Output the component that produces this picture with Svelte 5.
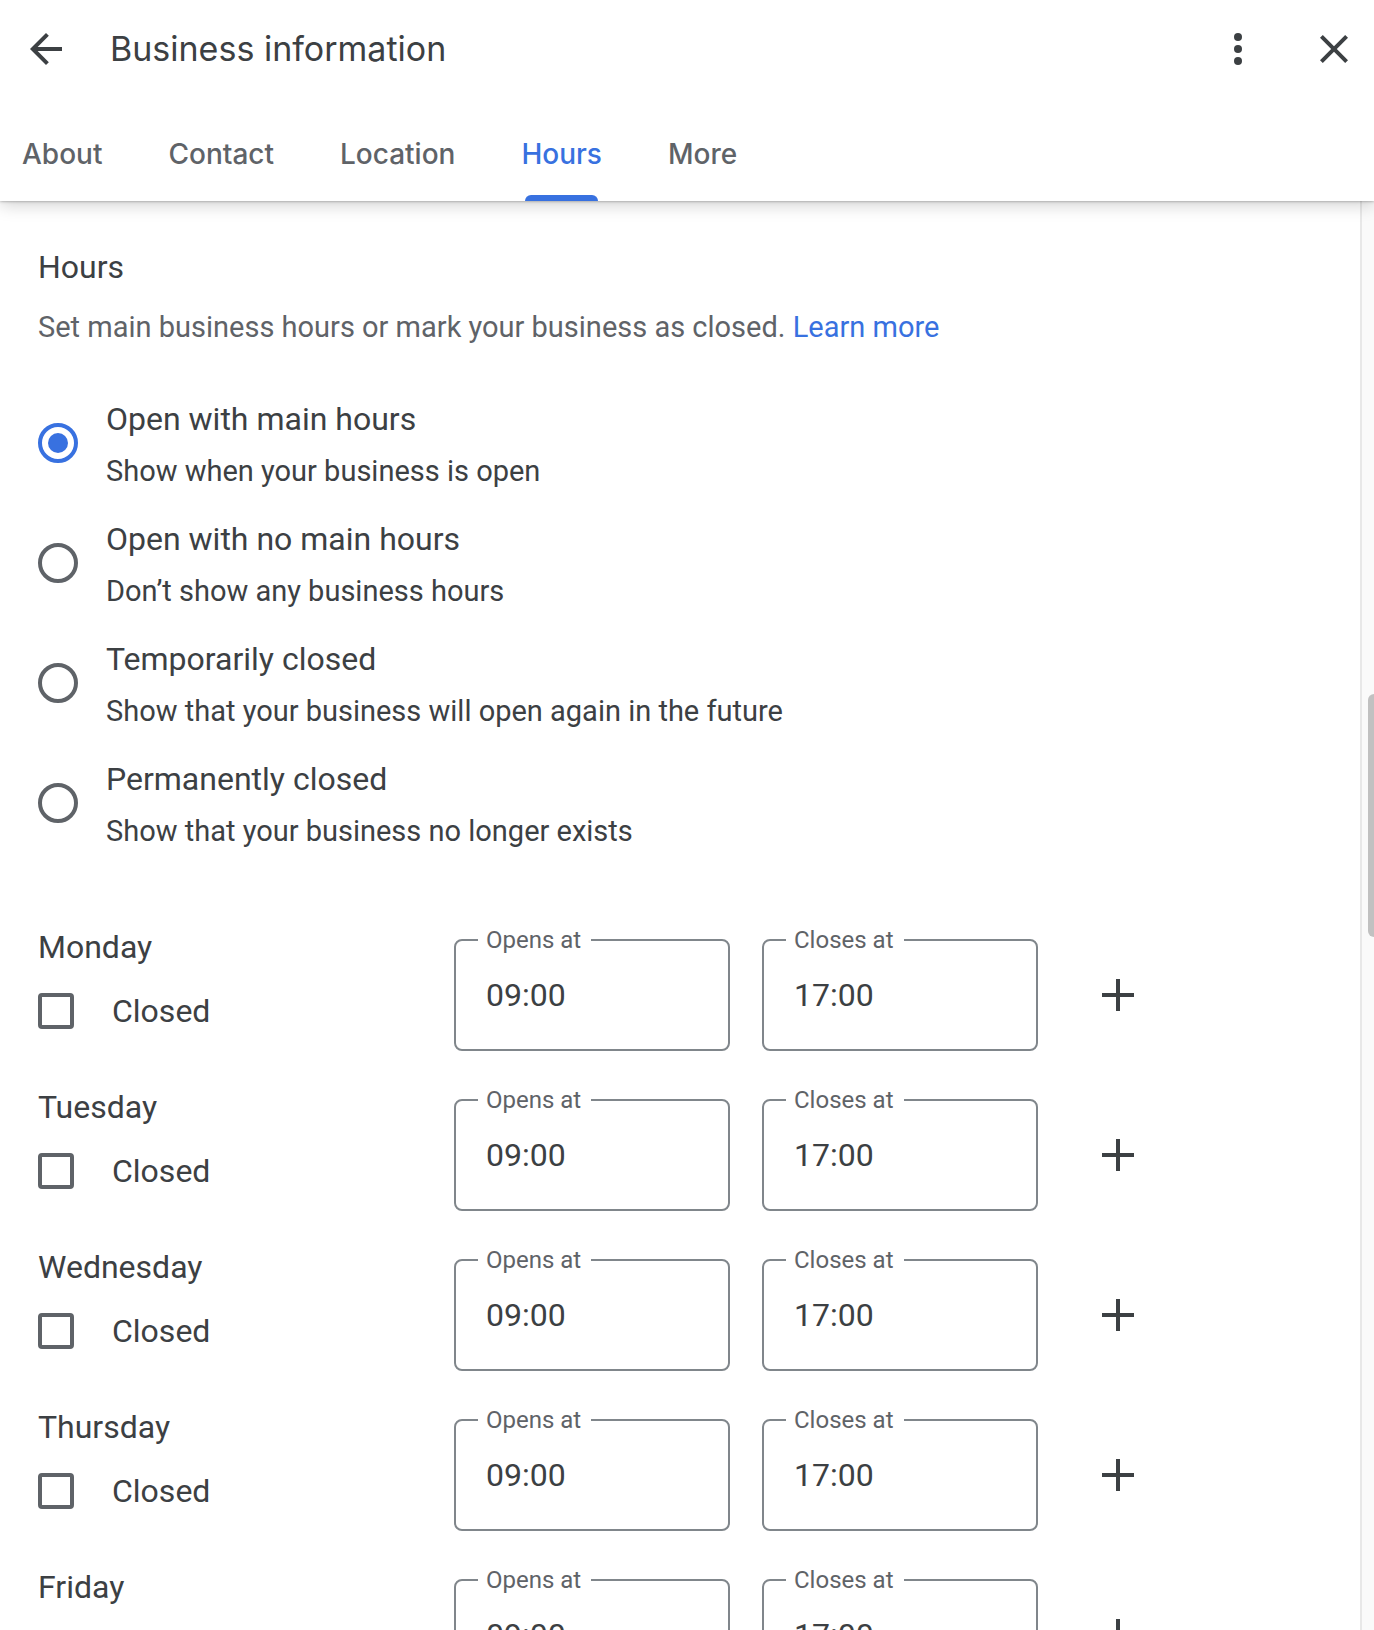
<script lang="ts">
    const tabs = ['About', 'Contact', 'Location', 'Hours', 'More']

    const modes = [
        { id: 'main', title: 'Open with main hours', text: 'Show when your business is open' },
        { id: 'no-main', title: 'Open with no main hours', text: 'Don’t show any business hours' },
        { id: 'temporary', title: 'Temporarily closed', text: 'Show that your business will open again in the future' },
        { id: 'permanent', title: 'Permanently closed', text: 'Show that your business no longer exists' },
    ]

    let activeTab = $state('Hours')
    let mode = $state('main')
    let days = $state(
        ['Monday', 'Tuesday', 'Wednesday', 'Thursday', 'Friday'].map((name) => ({
            name,
            closed: false,
            opens: '09:00',
            closes: '17:00',
        }))
    )
</script>

<div class="dialog">
    <header>
        <div class="bar">
            <button class="icon-button" aria-label="Back">
                <svg viewBox="0 0 24 24"><path d="M20 11H7.83l5.59-5.59L12 4l-8 8 8 8 1.41-1.41L7.83 13H20v-2z" /></svg>
            </button>
            <h1>Business information</h1>
            <button class="icon-button" aria-label="More options">
                <svg viewBox="0 0 24 24">
                    <circle cx="12" cy="6" r="2" />
                    <circle cx="12" cy="12" r="2" />
                    <circle cx="12" cy="18" r="2" />
                </svg>
            </button>
            <button class="icon-button" aria-label="Close">
                <svg viewBox="0 0 24 24"><path d="M19 6.41L17.59 5 12 10.59 6.41 5 5 6.41 10.59 12 5 17.59 6.41 19 12 13.41 17.59 19 19 17.59 13.41 12z" /></svg>
            </button>
        </div>
        <nav>
            {#each tabs as tab}
                <button class="tab" class:active={activeTab === tab} onclick={() => (activeTab = tab)}>{tab}</button>
            {/each}
        </nav>
    </header>

    <div class="body">
        <main>
            <h2>Hours</h2>
            <p class="intro">Set main business hours or mark your business as closed. <a href="#learn-more">Learn more</a></p>

            <div class="modes" role="radiogroup" aria-label="Hours">
                {#each modes as item}
                    <label class="mode">
                        <input type="radio" name="mode" value={item.id} bind:group={mode} />
                        <span class="mode-text">
                            <span class="mode-title">{item.title}</span>
                            <span class="mode-hint">{item.text}</span>
                        </span>
                    </label>
                {/each}
            </div>

            <div class="days">
                {#each days as day}
                    <section class="day">
                        <div class="day-info">
                            <h3>{day.name}</h3>
                            <label class="closed">
                                <input type="checkbox" bind:checked={day.closed} />
                                Closed
                            </label>
                        </div>
                        <div class="times">
                            <div class="field">
                                <label for="{day.name}-opens">Opens at</label>
                                <input id="{day.name}-opens" type="text" bind:value={day.opens} />
                            </div>
                            <div class="field">
                                <label for="{day.name}-closes">Closes at</label>
                                <input id="{day.name}-closes" type="text" bind:value={day.closes} />
                            </div>
                            <button class="icon-button add" aria-label="Add hours">
                                <svg viewBox="0 0 24 24"><path d="M20 13h-7v7h-2v-7H4v-2h7V4h2v7h7v2z" /></svg>
                            </button>
                        </div>
                    </section>
                {/each}
            </div>
        </main>
        <div class="rail"><div class="thumb"></div></div>
    </div>
</div>

<style>
    :global(body) {
        background: #fff;
    }

    .dialog {
        display: flex;
        flex-direction: column;
        height: 100vh;
        overflow: hidden;
        font-family: Roboto, "Liberation Sans", sans-serif;
        font-size: 32px;
        line-height: 48px;
        color: #3c4043;
    }

    h1, h2, h3, p {
        margin: 0;
        font-size: inherit;
        font-weight: 400;
    }

    button, input {
        margin: 0;
        font: inherit;
        color: inherit;
    }

    button {
        padding: 0;
        border: 0;
        background: none;
        cursor: pointer;
    }

    header {
        position: relative;
        z-index: 1;
        flex: none;
        background: #fff;
        box-shadow: 0 0 3px rgba(0, 0, 0, 0.4), 0 4px 16px rgba(0, 0, 0, 0.18);
    }

    .bar {
        display: flex;
        align-items: center;
        gap: 48px;
        height: 98px;
        padding: 0 16px 0 22px;
    }

    h1 {
        flex: 1;
        margin-left: -8px;
        font-family: Inter, sans-serif;
        font-size: 34px;
    }

    .icon-button {
        flex: none;
        width: 48px;
        height: 48px;
    }

    .icon-button svg {
        display: block;
        width: 48px;
        height: 48px;
        fill: currentColor;
    }

    nav {
        display: flex;
        gap: 66px;
        padding: 0 22px;
    }

    .tab {
        position: relative;
        height: 103px;
        padding-top: 8px;
        font-family: Inter, sans-serif;
        font-size: 28px;
        font-weight: 500;
        color: #5f6368;
    }

    .tab.active {
        color: #3871e0;
    }

    .tab.active::after {
        content: '';
        position: absolute;
        right: 4px;
        bottom: 0;
        left: 4px;
        height: 6px;
        border-radius: 6px 6px 0 0;
        background: #3871e0;
    }

    .body {
        display: flex;
        flex: 1;
        min-height: 0;
    }

    main {
        flex: 1;
        overflow-y: auto;
        scrollbar-width: none;
        padding: 42px 38px;
    }

    .intro {
        margin-top: 16px;
        font-size: 29px;
        line-height: 40px;
        color: #5f6368;
    }

    a {
        color: #3871e0;
        text-decoration: none;
    }

    .modes {
        display: grid;
        gap: 24px;
        margin-top: 48px;
    }

    .mode {
        display: flex;
        align-items: center;
        gap: 28px;
    }

    .mode-text {
        display: grid;
        gap: 8px;
    }

    .mode-hint {
        font-size: 29px;
        line-height: 40px;
    }

    input[type='radio'], input[type='checkbox'] {
        appearance: none;
        box-sizing: border-box;
        flex: none;
        border: 4px solid #5f6368;
        background: #fff;
    }

    input[type='radio'] {
        width: 40px;
        height: 40px;
        padding: 6px;
        border-radius: 50%;
    }

    input[type='radio']:checked {
        border-color: #3871e0;
    }

    input[type='radio']:checked::before {
        content: '';
        display: block;
        width: 20px;
        height: 20px;
        border-radius: 50%;
        background: #3871e0;
    }

    input[type='checkbox'] {
        width: 36px;
        height: 36px;
        border-radius: 4px;
    }

    input[type='checkbox']:checked {
        border-color: #3871e0;
        background: #3871e0;
    }

    .days {
        display: grid;
        gap: 32px;
        margin-top: 72px;
    }

    .day {
        display: flex;
    }

    .day-info {
        width: 416px;
    }

    .closed {
        display: flex;
        align-items: center;
        gap: 38px;
        width: max-content;
        margin-top: 16px;
    }

    .times {
        display: flex;
        align-items: center;
        gap: 32px;
        margin-top: 16px;
    }

    .field {
        position: relative;
    }

    .field label {
        position: absolute;
        top: -15px;
        left: 24px;
        padding: 0 10px 0 8px;
        background: #fff;
        font-size: 24px;
        line-height: 32px;
        color: #5f6368;
    }

    .field input {
        display: block;
        box-sizing: border-box;
        width: 276px;
        height: 112px;
        padding: 0 30px;
        border: 2px solid #80868b;
        border-radius: 8px;
        background: #fff;
    }

    .add {
        margin-left: 24px;
    }

    .rail {
        position: relative;
        flex: none;
        width: 12px;
        border-left: 2px solid #e8e8e8;
        background: #fafafa;
    }

    .thumb {
        position: absolute;
        top: 34.5%;
        right: 0;
        width: 6px;
        height: 17%;
        border-radius: 6px 0 0 6px;
        background: #c1c1c1;
    }
</style>
